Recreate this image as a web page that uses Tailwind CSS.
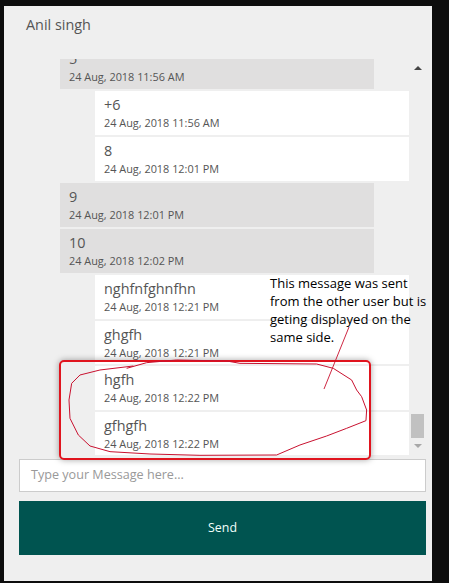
<!DOCTYPE html>
<html lang="en">
<head>
  <meta charset="UTF-8" />
  <title>Chat</title>
  <script src="https://cdn.jsdelivr.net/npm/@tailwindcss/browser@4"></script>
</head>
<body class="relative w-[449px] h-[583px] overflow-hidden bg-[#0d0d0d] font-['Open_Sans',sans-serif]">
  <div class="ml-[4px] mt-[6px] w-[428px] h-[575px] bg-[#efefef] flex flex-col">
    <div class="h-[53px] pl-[22px] pt-[8px] text-[14.4px] leading-[22px] text-[#555]">Anil singh</div>

    <div class="flex h-[396px] ml-[56px] overflow-hidden">
      <div class="w-[349px] -mt-[14px] flex flex-col gap-[2px]">
        <div class="h-[44px] shrink-0 mr-[35px] pl-[9px] pt-[3px] bg-[#e0dfdf] text-[#555]"><p class="text-[14.4px] leading-[21px]">5</p><p class="text-[10.9px] leading-[16px] text-[#555]">24 Aug, 2018 11:56 AM</p></div>
        <div class="h-[44px] shrink-0 ml-[35px] pl-[9px] pt-[3px] bg-white text-[#555]"><p class="text-[14.4px] leading-[21px]">+6</p><p class="text-[10.9px] leading-[16px] text-[#555]">24 Aug, 2018 11:56 AM</p></div>
        <div class="h-[44px] shrink-0 ml-[35px] pl-[9px] pt-[3px] bg-white text-[#555]"><p class="text-[14.4px] leading-[21px]">8</p><p class="text-[10.9px] leading-[16px] text-[#555]">24 Aug, 2018 12:01 PM</p></div>
        <div class="h-[44px] shrink-0 mr-[35px] pl-[9px] pt-[3px] bg-[#e0dfdf] text-[#555]"><p class="text-[14.4px] leading-[21px]">9</p><p class="text-[10.9px] leading-[16px] text-[#555]">24 Aug, 2018 12:01 PM</p></div>
        <div class="h-[44px] shrink-0 mr-[35px] pl-[9px] pt-[3px] bg-[#e0dfdf] text-[#555]"><p class="text-[14.4px] leading-[21px]">10</p><p class="text-[10.9px] leading-[16px] text-[#555]">24 Aug, 2018 12:02 PM</p></div>
        <div class="h-[44px] shrink-0 ml-[35px] pl-[9px] pt-[3px] bg-white text-[#555]"><p class="text-[14.4px] leading-[21px]">nghfnfghnfhn</p><p class="text-[10.9px] leading-[16px] text-[#555]">24 Aug, 2018 12:21 PM</p></div>
        <div class="h-[44px] shrink-0 -mt-[1px] ml-[35px] pl-[9px] pt-[3px] bg-white border-t border-[#eee] text-[#555]"><p class="text-[14.4px] leading-[21px]">ghgfh</p><p class="text-[10.9px] leading-[16px] text-[#555]">24 Aug, 2018 12:21 PM</p></div>
        <div class="h-[44px] shrink-0 ml-[35px] pl-[9px] pt-[3px] bg-white text-[#555]"><p class="text-[14.4px] leading-[21px]">hgfh</p><p class="text-[10.9px] leading-[16px] text-[#555]">24 Aug, 2018 12:22 PM</p></div>
        <div class="h-[44px] shrink-0 ml-[35px] pl-[9px] pt-[3px] bg-white text-[#555]"><p class="text-[14.4px] leading-[21px]">gfhgfh</p><p class="text-[10.9px] leading-[16px] text-[#555]">24 Aug, 2018 12:22 PM</p></div>
      </div>
      <!-- scrollbar -->
      <div class="w-[13px] ml-[2px] flex flex-col items-center">
        <div class="mt-[7px] w-0 h-0 border-x-[4px] border-x-transparent border-b-[4px] border-b-[#444]"></div>
        <div class="mt-auto w-[13px] h-[24px] bg-[#c1c1c1]"></div>
        <div class="mt-[6px] mb-[7px] w-0 h-0 border-x-[4px] border-x-transparent border-t-[4px] border-t-[#a8a8a8]"></div>
      </div>
    </div>

    <div class="ml-[15px] mr-[6px] mt-[4px] h-[33px] flex items-center px-[11px] bg-white border border-[#ccc] text-[12.6px] text-[#999]">Type your Message here...</div>
    <button class="ml-[15px] mr-[6px] mt-[9px] h-[54px] bg-[#005450] text-[#f2fffb] text-[12.4px] font-medium">Send</button>
  </div>

  <!-- annotation drawn over the screenshot -->
  <div class="absolute left-[59px] top-[360px] w-[312px] h-[100px] rounded-[5px] border-2 border-[#e0141e] shadow-[0_0_6px_rgba(0,0,0,0.35)]"></div>
  <svg class="absolute left-0 top-0" width="449" height="583" fill="none" stroke="#c8102e">
    <path d="M349 327L324 389" stroke-width="0.9" />
    <g transform="translate(0 350) scale(0.3333)">
      <path stroke-width="3" stroke-linejoin="round" d="M380 55L440 38L530 30L680 33L720 40L950 42L1000 55L1055 90L1070 120L1085 140L1100 180L1098 212L1040 235L980 258L900 285L830 315L600 316L450 312L330 305L270 288L235 255L210 205L207 150L215 100L240 75L300 60L400 48" />
    </g>
  </svg>
  <p class="absolute left-[270px] top-[274px] w-[160px] text-[13px] leading-[18px] text-black">This message was sent from the other user but is geting displayed on the same side.</p>
</body>
</html>
